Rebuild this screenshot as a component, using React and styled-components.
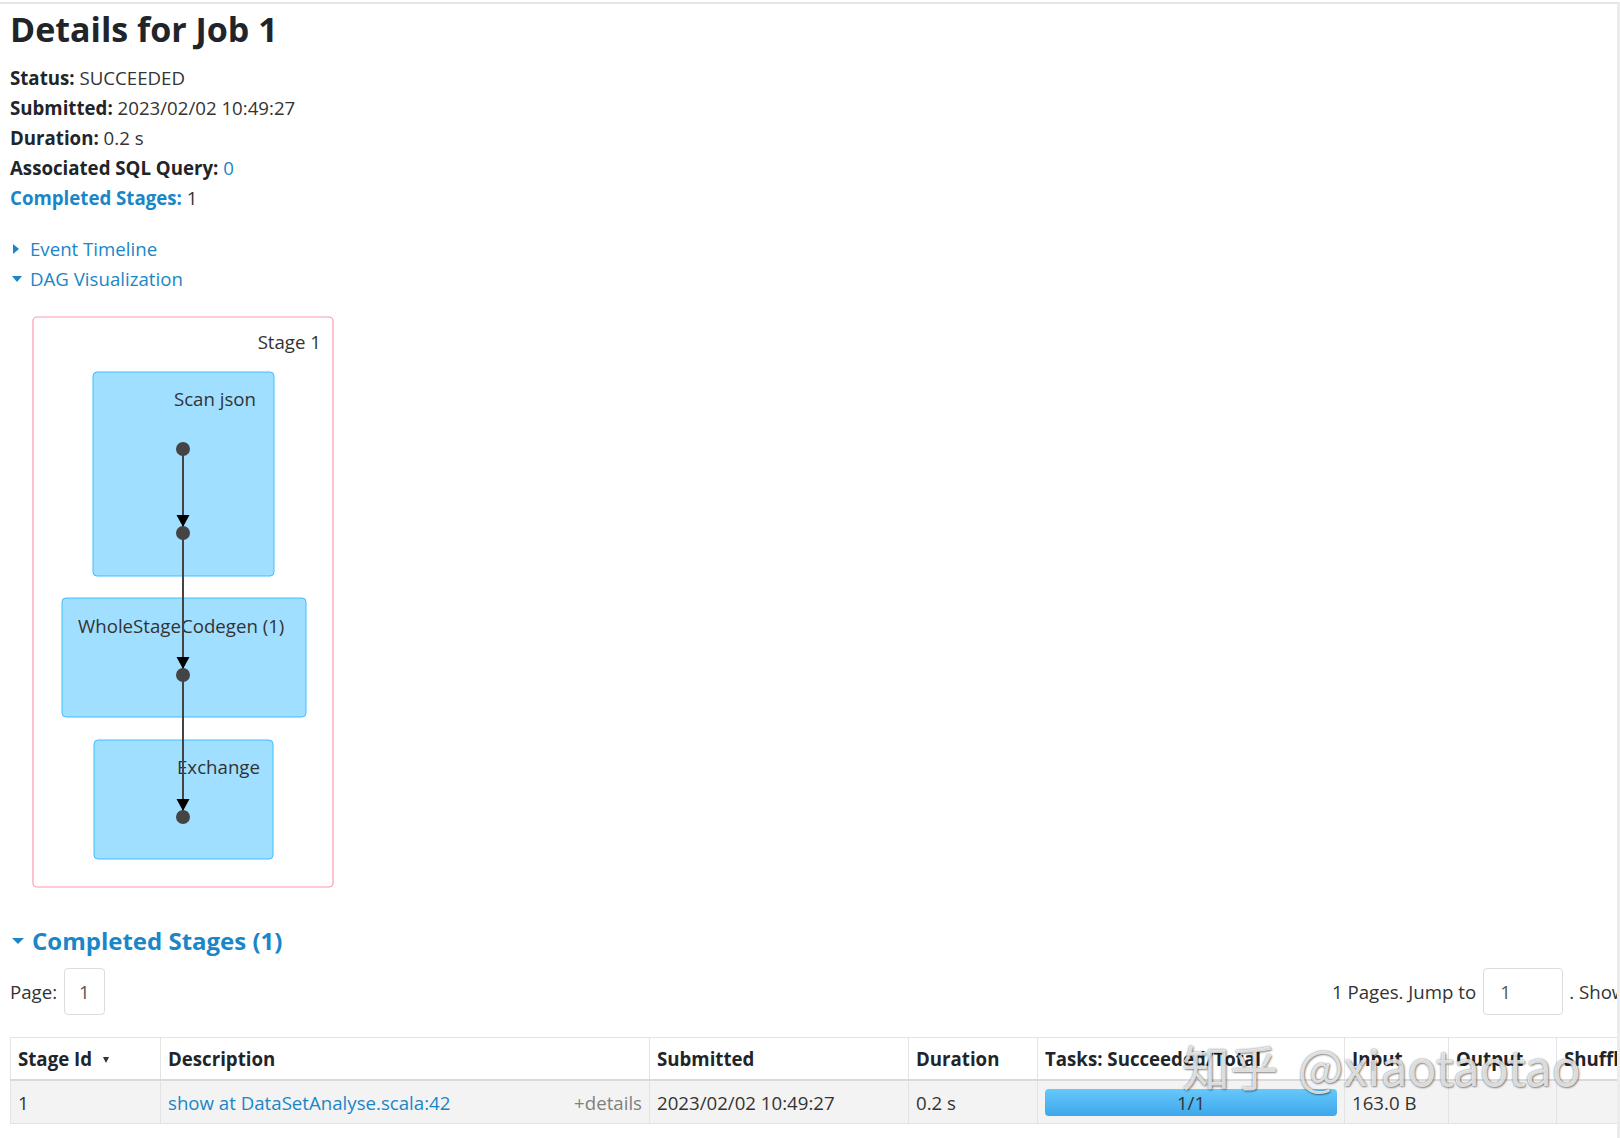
import React from "react";
import styled, { createGlobalStyle } from "styled-components";

const LINK = "#1a86c8";

const GlobalStyle = createGlobalStyle`
  html, body {
    margin: 0;
    padding: 0;
    background: #fff;
    overflow: hidden;
  }
  body {
    font-family: "Open Sans", "Noto Sans", "Liberation Sans", sans-serif;
    font-size: 18.67px;
    color: #333;
  }
`;

const Window = styled.div`
  position: relative;
  width: 1620px;
  height: 1136px;
  margin-top: 2px;
  border-top: 2px solid #e6e6e6;
  border-right: 3px solid #ececec;
  box-sizing: border-box;
  overflow: hidden;
`;

const Page = styled.div`
  width: 2000px;
  padding: 0 10px;
  box-sizing: border-box;
`;

const Title = styled.h1`
  margin: 5px 0 14px;
  font-size: 34px;
  line-height: 40px;
  font-weight: 700;
  color: #212529;
`;

const InfoList = styled.ul`
  list-style: none;
  margin: 0;
  padding: 0;
  li {
    line-height: 30px;
    white-space: nowrap;
  }
`;

const Label = styled.strong`
  font-weight: 700;
  color: ${(p) => (p.$link ? LINK : "#212529")};
`;

const Link = styled.a`
  color: ${LINK};
  text-decoration: none;
  cursor: pointer;
`;

const Toggles = styled.div`
  margin-top: 21px;
`;

const Toggle = styled.div`
  display: flex;
  align-items: center;
  line-height: 30px;
  color: ${LINK};
  cursor: pointer;
`;

const Caret = styled.span`
  display: inline-block;
  width: 0;
  height: 0;
  ${(p) =>
    p.$open
      ? `
    margin: 0 8px 0 2px;
    border-left: ${p.$big ? 6 : 5}px solid transparent;
    border-right: ${p.$big ? 6 : 5}px solid transparent;
    border-top: 6px solid ${LINK};
  `
      : `
    margin: 0 11px 0 3px;
    border-top: 5px solid transparent;
    border-bottom: 5px solid transparent;
    border-left: 6px solid ${LINK};
  `}
`;

const DagSvg = styled.svg`
  display: block;
  margin: 11px 0 0 10px;
  font-family: "Open Sans", "Noto Sans", "Liberation Sans", sans-serif;
  font-size: 18.67px;
`;

const SectionHeading = styled.h4`
  display: flex;
  align-items: center;
  margin: 29px 0 0;
  font-size: 24px;
  line-height: 34px;
  font-weight: 700;
  color: ${LINK};
`;

const PagerRow = styled.div`
  display: grid;
  grid-template-columns: 1322px auto;
  align-items: center;
  margin-top: 10px;
  height: 47px;
`;

const PagerGroup = styled.div`
  display: flex;
  align-items: center;
  white-space: nowrap;
  color: #333;
`;

const PageBox = styled.div`
  box-sizing: border-box;
  width: ${(p) => p.$w}px;
  height: 47px;
  margin: 0 6px 0 7px;
  padding-left: ${(p) => p.$pad}px;
  border: 1px solid #dcdcdc;
  border-radius: 4px;
  line-height: 45px;
  color: #555;
`;

const TableWrap = styled.div`
  position: relative;
  margin-top: 22px;
`;

const Table = styled.table`
  border-collapse: collapse;
  table-layout: fixed;
  width: 1846px;
`;

const Th = styled.th`
  height: 41px;
  padding: 0 7px;
  text-align: left;
  font-weight: 700;
  color: #212529;
  white-space: nowrap;
  overflow: hidden;
  background: #fff;
  border: 1px solid #e3e3e3;
  border-bottom: 2px solid #dadada;
`;

const SortArrow = styled.span`
  display: inline-block;
  vertical-align: middle;
  margin: -3px 0 0 11px;
  border-left: 3.5px solid transparent;
  border-right: 3.5px solid transparent;
  border-top: 6px solid #333;
`;

const Td = styled.td`
  height: 42px;
  padding: 0 7px;
  white-space: nowrap;
  overflow: hidden;
  background: #f3f3f3;
  border: 1px solid #e3e3e3;
`;

const Details = styled.span`
  float: right;
  color: #808080;
`;

const Progress = styled.div`
  height: 27px;
  border-radius: 4px;
  background: linear-gradient(#66c9fb, #3ea6ea);
  text-align: center;
  line-height: 27px;
  color: #333;
`;

const Watermark = styled.div`
  position: absolute;
  left: 1172px;
  top: 0;
  font-family: "Noto Sans CJK SC", "Open Sans", sans-serif;
  font-size: 48px;
  line-height: 56px;
  white-space: nowrap;
  color: rgba(255, 255, 255, 0.78);
  text-shadow: 0 0 2px rgba(0, 0, 0, 0.5), 1px 1px 2px rgba(0, 0, 0, 0.35);
  pointer-events: none;
  span {
    margin-left: 20px;
  }
`;

const X = 163;
const dots = [144, 228, 370, 512];

const Dag = () => (
  <DagSvg width="330" height="590" viewBox="0 0 330 590">
    <rect x="13" y="12" width="300" height="570" rx="4" fill="#fff" stroke="#FF99AC" strokeWidth="1.2" />
    <text x="301" y="44" textAnchor="end" fill="#333">Stage 1</text>

    <rect x="73" y="67" width="181" height="204" rx="4" fill="#A0DFFF" stroke="#3EC0FF" />
    <text x="236" y="101" textAnchor="end" fill="#333">Scan json</text>

    <rect x="42" y="293" width="244" height="119" rx="4" fill="#A0DFFF" stroke="#3EC0FF" />
    <text x="58" y="328" fill="#333">WholeStageCodegen (1)</text>

    <rect x="74" y="435" width="179" height="119" rx="4" fill="#A0DFFF" stroke="#3EC0FF" />
    <text x="157" y="469" fill="#333">Exchange</text>

    <line x1={X} y1={dots[0]} x2={X} y2={dots[3]} stroke="#444" strokeWidth="2" />
    {dots.slice(1).map((cy) => (
      <path key={cy} d={`M${X - 6.5} ${cy - 18} L${X + 6.5} ${cy - 18} L${X} ${cy - 6} Z`} fill="#000" />
    ))}
    {dots.map((cy) => (
      <circle key={cy} cx={X} cy={cy} r="7" fill="#444" />
    ))}
  </DagSvg>
);

const columns = [150, 489, 259, 129, 307, 104, 108, 150, 150];

export default function App() {
  return (
    <>
      <GlobalStyle />
      <Window>
        <Page>
          <Title>Details for Job 1</Title>
          <InfoList>
            <li><Label>Status:</Label> SUCCEEDED</li>
            <li><Label>Submitted:</Label> 2023/02/02 10:49:27</li>
            <li><Label>Duration:</Label> 0.2 s</li>
            <li><Label>Associated SQL Query:</Label> <Link>0</Link></li>
            <li><Label $link>Completed Stages:</Label> 1</li>
          </InfoList>

          <Toggles>
            <Toggle><Caret />Event Timeline</Toggle>
            <Toggle><Caret $open />DAG Visualization</Toggle>
          </Toggles>

          <Dag />

          <SectionHeading><Caret $open $big />Completed Stages (1)</SectionHeading>

          <PagerRow>
            <PagerGroup>
              Page:<PageBox $w={41} $pad={14}>1</PageBox>
            </PagerGroup>
            <PagerGroup>
              1 Pages. Jump to<PageBox $w={80} $pad={16}>1</PageBox>. Show<PageBox $w={80} $pad={16}>100</PageBox>items in a page. Go
            </PagerGroup>
          </PagerRow>

          <TableWrap>
            <Table>
              <colgroup>
                {columns.map((w, i) => <col key={i} style={{ width: w }} />)}
              </colgroup>
              <thead>
                <tr>
                  <Th>Stage Id<SortArrow /></Th>
                  <Th>Description</Th>
                  <Th>Submitted</Th>
                  <Th>Duration</Th>
                  <Th>Tasks: Succeeded/Total</Th>
                  <Th>Input</Th>
                  <Th>Output</Th>
                  <Th>Shuffle Read</Th>
                  <Th>Shuffle Write</Th>
                </tr>
              </thead>
              <tbody>
                <tr>
                  <Td>1</Td>
                  <Td><Link>show at DataSetAnalyse.scala:42</Link><Details>+details</Details></Td>
                  <Td>2023/02/02 10:49:27</Td>
                  <Td>0.2 s</Td>
                  <Td><Progress>1/1</Progress></Td>
                  <Td>163.0 B</Td>
                  <Td></Td>
                  <Td></Td>
                  <Td></Td>
                </tr>
              </tbody>
            </Table>
            <Watermark>知乎<span>@xiaotaotao</span></Watermark>
          </TableWrap>
        </Page>
      </Window>
    </>
  );
}
